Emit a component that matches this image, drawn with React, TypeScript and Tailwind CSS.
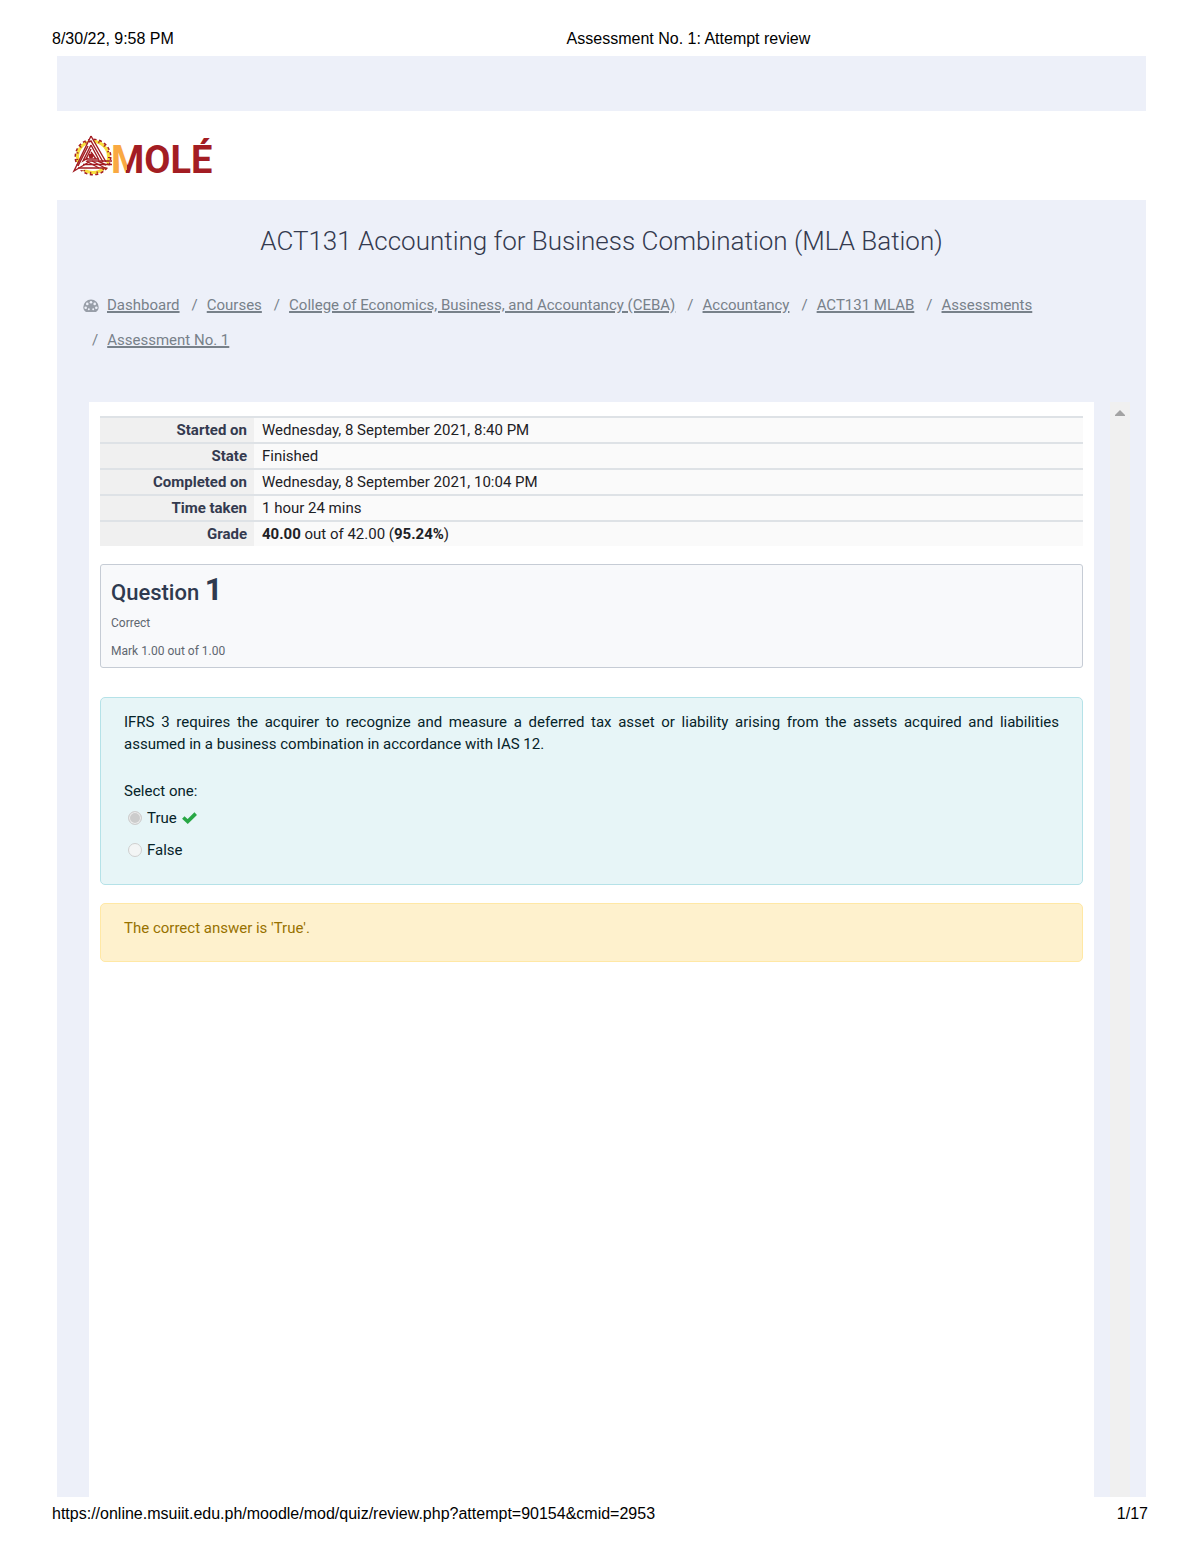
const crumbs = [
  "Dashboard",
  "Courses",
  "College of Economics, Business, and Accountancy (CEBA)",
  "Accountancy",
  "ACT131 MLAB",
  "Assessments",
  "Assessment No. 1",
];

const summary = [
  { label: "Started on", value: "Wednesday, 8 September 2021, 8:40 PM" },
  { label: "State", value: "Finished" },
  { label: "Completed on", value: "Wednesday, 8 September 2021, 10:04 PM" },
  { label: "Time taken", value: "1 hour 24 mins" },
  { label: "Grade", value: <><b>40.00</b> out of 42.00 (<b>95.24%</b>)</> },
];

export default function App() {
  return (
    <div className="flex min-h-screen flex-col bg-white px-[52px] font-['Roboto',sans-serif] text-[15px] text-[#1d2125]">
      <header className="grid grid-cols-[3fr_auto_2fr] pt-[29px] pb-[7px] font-['Liberation_Sans',sans-serif] text-base leading-5 text-black">
        <span>8/30/22, 9:58 PM</span>
        <span className="pl-2">Assessment No. 1: Attempt review</span>
      </header>

      <div className="mr-0.5 ml-[5px] h-[55px] bg-[#edf0f9]" />
      <div className="mr-0.5 ml-[5px] flex h-[89px] items-center px-4">
        <a href="#home" aria-label="MOLÉ"><Logo /></a>
      </div>

      <main className="mr-0.5 ml-[5px] flex flex-1 flex-col bg-[#edf0f9]">
        <h1 className="pt-[25px] text-center text-[26px] leading-8 font-light text-[#343a4f]">
          ACT131 Accounting for Business Combination (MLA Bation)
        </h1>

        <nav aria-label="Breadcrumb" className="pt-[31px] pr-20 pb-11 pl-[26px] leading-[35px] text-[#78818a]">
          <ol className="flex flex-wrap gap-x-[3px]">
            {crumbs.map((crumb, i) => (
              <li key={crumb} className="flex items-center">
                {i === 0 ? <DashboardIcon /> : <span className="px-[9px]">/</span>}
                <a href="#crumb" className="underline decoration-2 underline-offset-1">{crumb}</a>
              </li>
            ))}
          </ol>
        </nav>

        <div className="flex flex-1 pr-4 pl-8">
          <div className="flex-1 bg-white px-[11px] pt-[14px]">
            <Summary />
            <Question />
          </div>
          <div className="ml-4 flex w-5 justify-center bg-[#f0f0f0] pt-2">
            <svg viewBox="0 0 10 6" className="h-[6px] w-[10px]" fill="#a3a3a3"><path d="M5 0 10 5v1H0V5z" /></svg>
          </div>
        </div>
      </main>

      <footer className="flex justify-between pt-[7px] pb-[29px] font-['Liberation_Sans',sans-serif] text-base leading-5 text-black">
        <span>https://online.msuiit.edu.ph/moodle/mod/quiz/review.php?attempt=90154&cmid=2953</span>
        <span>1/17</span>
      </footer>
    </div>
  );
}

function Summary() {
  return (
    <table className="w-full border-collapse leading-6">
      <tbody>
        {summary.map((row) => (
          <tr key={row.label} className="border-t-2 border-[#dee2e6]">
            <th scope="row" className="w-[154px] bg-[#f0f0f0] pr-[7px] text-right font-bold text-[#343a4f]">{row.label}</th>
            <td className="bg-[#fafafa] pl-2">{row.value}</td>
          </tr>
        ))}
      </tbody>
    </table>
  );
}

function Question() {
  return (
    <>
      <section className="mt-[18px] rounded-[3px] border border-[#c6ccd5] bg-[#f8f9fb] px-[10px] pt-[9px] pb-0.5 text-[#5f6770]">
        <h2 className="text-[22px] leading-8 font-medium text-[#2f3a4f]">
          Question <span className="text-[31px] font-bold">1</span>
        </h2>
        <p className="text-xs leading-7">Correct</p>
        <p className="text-xs leading-7">Mark 1.00 out of 1.00</p>
      </section>

      <section className="mt-[29px] rounded-[5px] border border-[#b5e2e8] bg-[#e7f5f7] px-[23px] pt-[13px] pb-[18px] leading-[22px] text-[#062329]">
        <p className="text-justify">
          IFRS 3 requires the acquirer to recognize and measure a deferred tax asset or liability arising from the assets acquired and liabilities assumed in a business combination in accordance with IAS 12.
        </p>
        <fieldset className="pt-[25px]">
          <legend className="float-left w-full">Select one:</legend>
          <label className="clear-both flex h-8 items-center gap-[5px] pl-1">
            <Radio defaultChecked />
            True
            <svg viewBox="0 0 15 12" className="h-3 w-[15px]" fill="none" stroke="#28a745" strokeWidth="3.600">
              <path d="M1.300 5.500 5.700 9.500 13.700 1.600" />
            </svg>
          </label>
          <label className="flex h-8 items-center gap-[5px] pl-1">
            <Radio />
            False
          </label>
        </fieldset>
      </section>

      <section className="mt-[18px] rounded-[5px] border border-[#ffe8a5] bg-[#fef1cd] px-[23px] pt-[13px] pb-[22px] leading-[22px] text-[#987100]">
        The correct answer is 'True'.
      </section>
    </>
  );
}

function Radio({ defaultChecked }: { defaultChecked?: boolean }) {
  return (
    <input
      type="radio"
      name="answer"
      disabled
      defaultChecked={defaultChecked}
      className="size-[14px] appearance-none rounded-full border border-[#cfcfcf] bg-[#f3f5f5] checked:bg-[#cccccc] checked:shadow-[inset_0_0_0_1px_#eeeeee]"
    />
  );
}

function DashboardIcon() {
  return (
    <svg viewBox="0 0 16 14" className="mr-2 h-[14px] w-4">
      <path d="M3 13C1.300 12 .3 10.300 .3 8.300a7.700 7.700 0 0 1 15.400 0c0 2-1 3.700-2.700 4.700z" fill="#989ea8" />
      <g fill="#edf0f9">
        <circle cx="8" cy="3.300" r="1.300" />
        <circle cx="4.300" cy="4.900" r="1.300" />
        <circle cx="11.700" cy="4.900" r="1.300" />
        <circle cx="2.700" cy="8.700" r="1.300" />
        <circle cx="13.300" cy="8.700" r="1.300" />
        <circle cx="5.800" cy="10.300" r="1" />
        <circle cx="10.200" cy="10.300" r="1" />
      </g>
    </svg>
  );
}

function Logo() {
  return (
    <svg viewBox="0 0 140 42" className="h-[42px] w-[140px] overflow-visible">
      <circle cx="20" cy="22" r="17" fill="none" stroke="#a31d23" strokeWidth="3" strokeDasharray="3 2.340" />
      <circle cx="20" cy="22" r="15.500" fill="#fff" stroke="#f8df3f" strokeWidth="3" />
      <circle cx="20" cy="22" r="16" fill="none" stroke="#a31d23" strokeWidth="2" strokeDasharray="1.200 5.500" />
      <path d="M17.500 1 36 32 1 36z" fill="#fff" />
      <g fill="none" stroke="#a31d23" strokeWidth="1.400">
        <path d="M18 1 1 36l15-9M18 1l15 26M16 7l2-1 12 21M15 11 5 31" />
        <path d="M14 26h25M10 29.500h29M5 33h28M18 10l-8 16 5-3M18 10l8 15" />
        <path d="M18 14l-5 10h12M18 17l5 7M13 26l13 7M19 26l13 7M25 26l8 4" />
      </g>
      <circle cx="18" cy="21" r="2.400" fill="#a31d23" />
      <defs>
        <linearGradient id="mole" gradientUnits="userSpaceOnUse" x1="40" y1="26" x2="70" y2="30">
          <stop offset="48%" stopColor="#f9a942" />
          <stop offset="48%" stopColor="#a31d23" />
        </linearGradient>
      </defs>
      <text x="38" y="38" fontFamily="Roboto, sans-serif" fontSize="38" fontWeight="700" fill="#a31d23">
        <tspan fill="url(#mole)">M</tspan>OLÉ
      </text>
    </svg>
  );
}
